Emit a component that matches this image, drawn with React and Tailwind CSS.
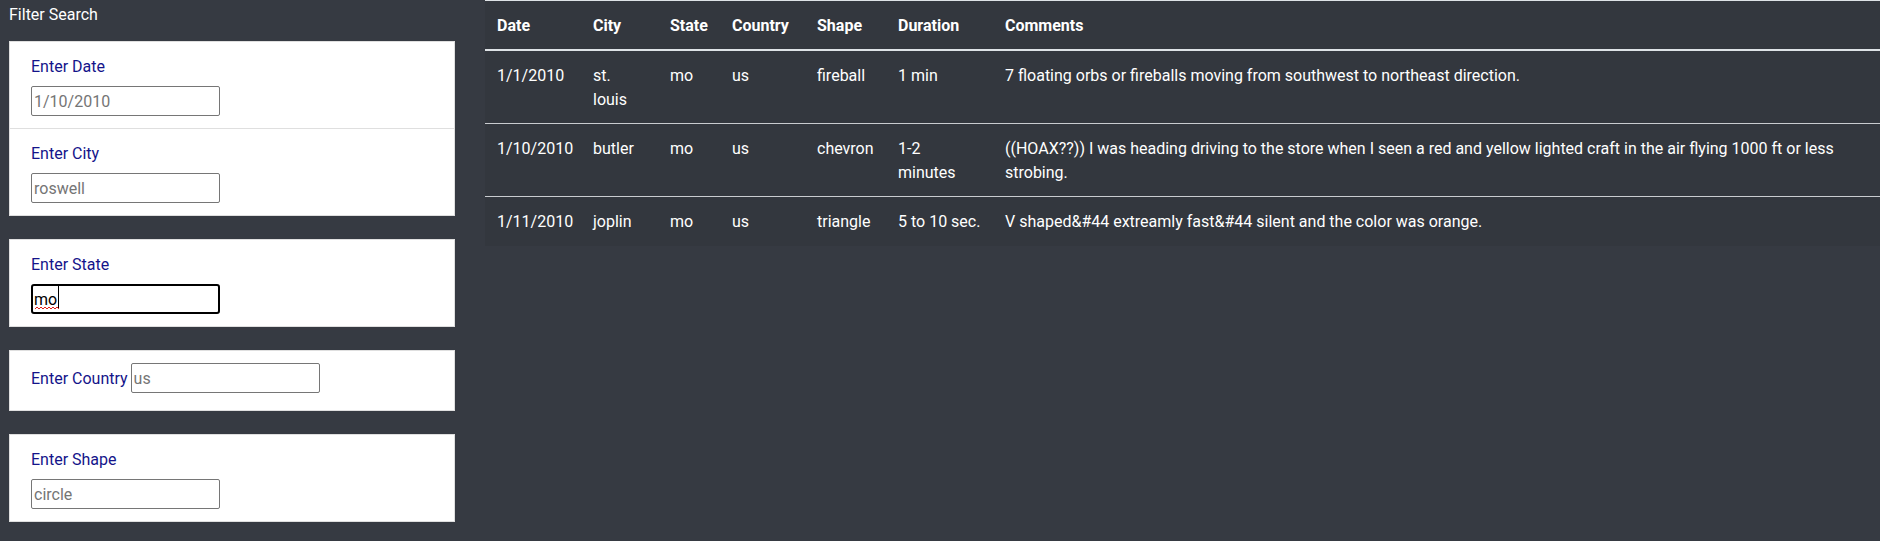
import React from 'react';

const sightings = [
  { date: '1/1/2010', city: ['st.', 'louis'], state: 'mo', country: 'us', shape: 'fireball', duration: ['1 min'], comments: '7 floating orbs or fireballs moving from southwest to northeast direction.' },
  { date: '1/10/2010', city: ['butler'], state: 'mo', country: 'us', shape: 'chevron', duration: ['1-2', 'minutes'], comments: '((HOAX??)) I was heading driving to the store when I seen a red and yellow lighted craft in the air flying 1000 ft or less strobing.' },
  { date: '1/11/2010', city: ['joplin'], state: 'mo', country: 'us', shape: 'triangle', duration: ['5 to 10 sec.'], comments: 'V shaped&#44 extreamly fast&#44 silent and the color was orange.' },
];

const font = { fontFamily: 'Roboto, "Noto Sans", sans-serif' };

const Lines = ({ parts }) => (
  <>
    {parts.map((p, i) => (
      <React.Fragment key={i}>
        {i > 0 && <br />}
        {p}
      </React.Fragment>
    ))}
  </>
);

const FieldInput = ({ placeholder }) => (
  <input
    type="text"
    placeholder={placeholder}
    className="h-[30px] w-[189px] rounded-[2px] border border-[#767676] bg-white px-[2px] text-base text-black placeholder:text-[#757575] outline-none"
  />
);

const Label = ({ children }) => (
  <label className="mb-[7px] block pt-px text-base leading-6 text-[#14148a]">{children}</label>
);

const Field = ({ label, placeholder, last }) => (
  <div className={`px-[21px] py-3 ${last ? '' : 'border-b border-[#dfdfdf]'}`}>
    <Label>{label}</Label>
    <FieldInput placeholder={placeholder} />
  </div>
);

const Panel = ({ children }) => (
  <div className="border border-[#dfdfdf] bg-white">{children}</div>
);

const cell = 'pt-[13px] pb-[11px] px-3 align-top';
const head = 'border-t border-b-2 border-[#dee2e6] pt-[13px] pb-[11px] px-3 font-bold';

export default function App() {
  return (
    <div className="flex min-h-screen bg-[#363a42]" style={font}>
      <div className="w-[455px] shrink-0 pl-[9px]">
        <h6 className="mt-[3px] mb-[14px] text-base leading-6 text-white">Filter Search</h6>
        <div className="flex flex-col gap-[23px]">
          <Panel>
            <Field label="Enter Date" placeholder="1/10/2010" />
            <Field label="Enter City" placeholder="roswell" last />
          </Panel>
          <Panel>
            <div className="px-[21px] py-3">
              <Label>Enter State</Label>
              <div className="relative w-[189px]">
                <input
                  type="text"
                  defaultValue="mo"
                  spellCheck={false}
                  className="h-[30px] w-[189px] rounded-[3px] border-2 border-black bg-white px-[1px] text-base text-black outline-none"
                />
                <span className="absolute top-[2px] left-[27px] h-[23px] w-px bg-black" />
                <svg className="absolute top-[22px] left-[4px]" width="24" height="4" viewBox="0 0 24 4">
                  <path d="M0 3 L2 1 L4 3 L6 1 L8 3 L10 1 L12 3 L14 1 L16 3 L18 1 L20 3 L22 1 L24 3" fill="none" stroke="#e0201a" strokeWidth="1" />
                </svg>
              </div>
            </div>
          </Panel>
          <Panel>
            <div className="flex items-center px-[21px] pt-3 pb-[17px]">
              <label className="mr-[3px] pt-px text-base leading-6 text-[#14148a]">Enter Country</label>
              <FieldInput placeholder="us" />
            </div>
          </Panel>
          <Panel>
            <Field label="Enter Shape" placeholder="circle" last />
          </Panel>
        </div>
      </div>

      <div className="ml-[30px] flex-1">
        <table className="w-full table-fixed border-collapse bg-[#33373e] text-left text-base leading-6 text-white">
          <thead>
            <tr>
              <th className={`w-[96px] ${head}`}>Date</th>
              <th className={`w-[77px] ${head}`}>City</th>
              <th className={`w-[62px] ${head}`}>State</th>
              <th className={`w-[85px] ${head}`}>Country</th>
              <th className={`w-[81px] ${head}`}>Shape</th>
              <th className={`w-[107px] ${head}`}>Duration</th>
              <th className={head}>Comments</th>
            </tr>
          </thead>
          <tbody>
            {sightings.map((s, i) => (
              <tr key={i} className={i > 0 ? 'border-t border-[#c9ccd0]' : ''}>
                <td className={`${cell} whitespace-nowrap`}>{s.date}</td>
                <td className={`${cell} whitespace-nowrap`}><Lines parts={s.city} /></td>
                <td className={cell}>{s.state}</td>
                <td className={cell}>{s.country}</td>
                <td className={cell}>{s.shape}</td>
                <td className={`${cell} whitespace-nowrap`}><Lines parts={s.duration} /></td>
                <td className={`${cell} ${i === 2 ? 'pb-[12px]' : ''}`}>{s.comments}</td>
              </tr>
            ))}
          </tbody>
        </table>
      </div>
    </div>
  );
}
